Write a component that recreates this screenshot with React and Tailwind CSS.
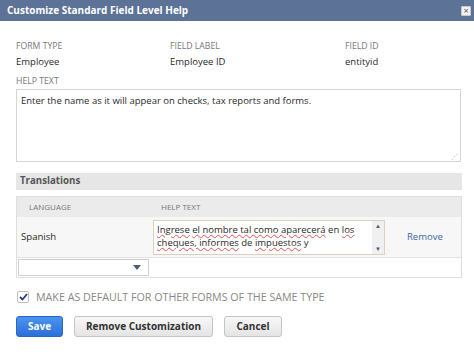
export default function App() {
  return (
    <div className="w-[474px] h-[363px] bg-white font-['Open_Sans',sans-serif] text-[#2a2a2a] overflow-hidden">
      {/* Title bar */}
      <div className="h-[21px] bg-[#5c7397] flex items-center justify-between pl-[7px] pr-[3px]">
        <span className="text-white font-bold text-[10px]">Customize Standard Field Level Help</span>
        <span className="w-[10px] h-[10px] bg-[#f2f2f2] border border-[#c8c8c8] rounded-[1px] flex items-center justify-center text-[#555] text-[9px] leading-none">×</span>
      </div>

      <div className="px-[16px]">
        {/* Field info */}
        <div className="flex mt-[18px] text-[9.5px] leading-[15px]">
          <div className="w-[154px]">
            <div className="text-[8.7px] text-[#777]">FORM TYPE</div>
            <div>Employee</div>
          </div>
          <div className="w-[175px]">
            <div className="text-[8.7px] text-[#777]">FIELD LABEL</div>
            <div>Employee ID</div>
          </div>
          <div>
            <div className="text-[8.7px] text-[#777]">FIELD ID</div>
            <div>entityid</div>
          </div>
        </div>

        <div className="mt-[5px] text-[8.7px] text-[#777] leading-[14px]">HELP TEXT</div>
        <div className="relative mt-[1px] h-[73px] w-[445px] border border-[#d6d6d6] px-[4px] py-[3px] text-[9.5px] leading-[15px]">
          Enter the name as it will appear on checks, tax reports and forms.
          <span className="absolute right-[2px] bottom-[1px] text-[7px] leading-none text-[#aaa]">⋰</span>
        </div>

        {/* Translations */}
        <div className="mt-[11px] h-[17px] w-[446px] bg-[#e6e6e6] flex items-center px-[4px] text-[9.7px] font-bold text-[#555]">Translations</div>

        <div className="mt-[6px] w-[446px] border border-[#dedede]">
          <div className="h-[20px] bg-[#ebebeb] flex items-center text-[8px] text-[#777]">
            <span className="w-[144px] pl-[12px]">LANGUAGE</span>
            <span>HELP TEXT</span>
          </div>
          <div className="h-[41px] bg-[#f7f7f7] flex items-center border-b border-[#e3e3e3]">
            <span className="w-[136px] pl-[4px] text-[9.6px]">Spanish</span>
            <div className="flex h-[35px] w-[232px] border border-[#e0cfc0] bg-white">
              <div className="flex-1 px-[3px] pt-[2px] text-[9.5px] leading-[13px] overflow-hidden">
                <span className="underline decoration-wavy decoration-[#e05050] decoration-[0.5px]">Ingrese</span>{" "}
                <span className="underline decoration-wavy decoration-[#e05050] decoration-[0.5px]">el nombre tal como aparecerá</span> en{" "}
                <span className="underline decoration-wavy decoration-[#e05050] decoration-[0.5px]">los</span>{" "}
                <span className="underline decoration-wavy decoration-[#e05050] decoration-[0.5px]">cheques, informes</span> de{" "}
                <span className="underline decoration-wavy decoration-[#e05050] decoration-[0.5px]">impuestos</span> y
              </div>
              <div className="w-[12px] bg-[#f0f0f0] flex flex-col justify-between items-center py-[2px] text-[6px] text-[#555] leading-none">
                <span>▲</span>
                <span>▼</span>
              </div>
            </div>
            <span className="ml-[22px] text-[9.5px] text-[#3b6aa3]">Remove</span>
          </div>
          <div className="h-[19px] bg-white flex items-center pl-[1px]">
            <div className="h-[17px] w-[131px] border border-[#cfcfcf] flex items-center justify-end pr-[7px]">
              <svg width="8" height="5" viewBox="0 0 8 5"><path d="M0 0h8L4 5z" fill="#4a5d7a" /></svg>
            </div>
          </div>
        </div>

        {/* Default checkbox */}
        <div className="mt-[11px] flex items-center gap-[7px] pl-[1px]">
          <span className="w-[12px] h-[12px] border border-[#bdbdbd] rounded-[2px] bg-white flex items-center justify-center">
            <svg width="9" height="8" viewBox="0 0 9 8"><path d="M1 4l2.5 2.5L8 1" stroke="#1f3f7a" strokeWidth="1.8" fill="none" /></svg>
          </span>
          <span className="text-[10.7px] text-[#888]">MAKE AS DEFAULT FOR OTHER FORMS OF THE SAME TYPE</span>
        </div>

        {/* Buttons */}
        <div className="mt-[11px] flex gap-[11px]">
          <button className="h-[21px] w-[47px] rounded-[3px] bg-gradient-to-b from-[#4a94f0] to-[#2b6fd8] border border-[#2a66c4] text-white text-[10px] font-bold">Save</button>
          <button className="h-[21px] w-[139px] rounded-[3px] bg-gradient-to-b from-[#f8f8f8] to-[#e4e4e4] border border-[#c4c4c4] text-[#333] text-[10px] font-bold">Remove Customization</button>
          <button className="h-[21px] w-[58px] rounded-[3px] bg-gradient-to-b from-[#f8f8f8] to-[#e4e4e4] border border-[#c4c4c4] text-[#333] text-[10px] font-bold">Cancel</button>
        </div>
      </div>
    </div>
  );
}
